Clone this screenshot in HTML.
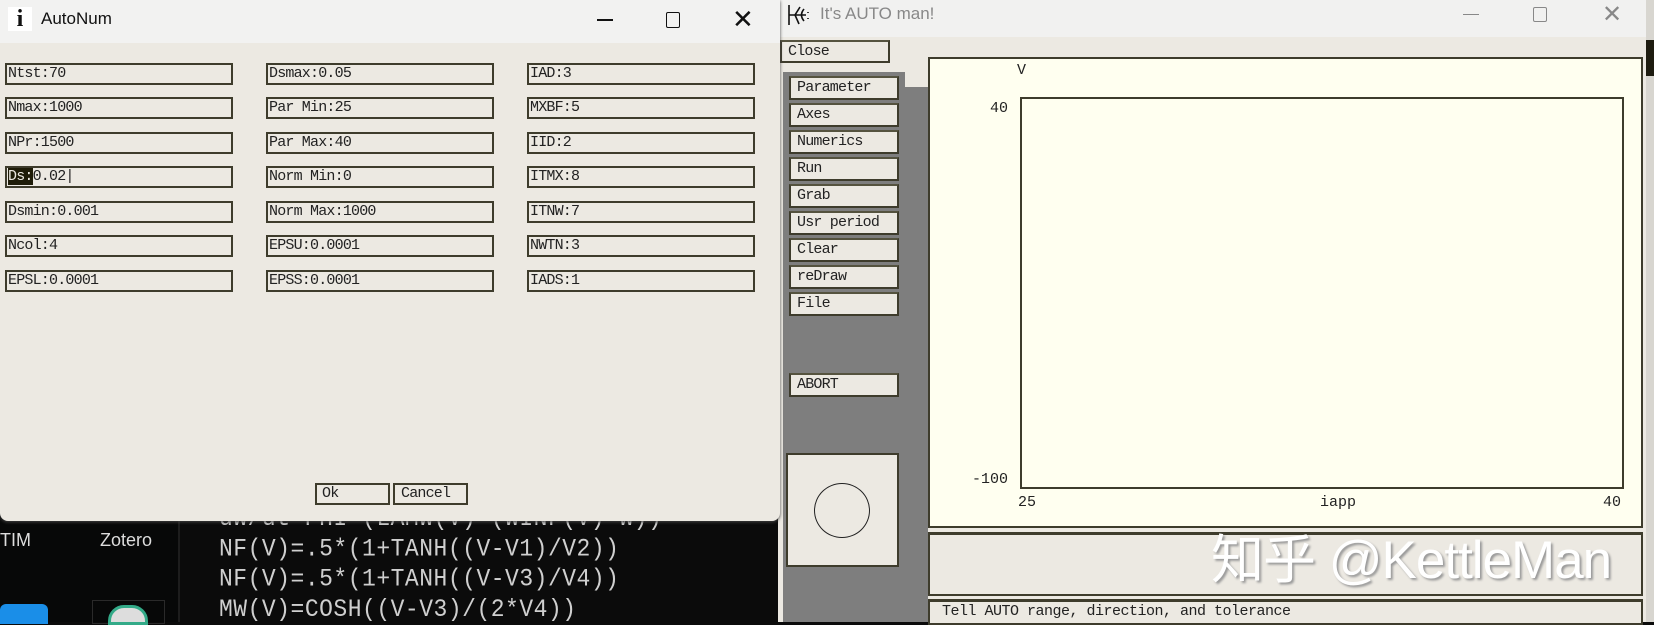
<!DOCTYPE html>
<html><head><meta charset="utf-8"><style>
*{margin:0;padding:0;box-sizing:border-box}
body{width:1654px;height:622px;position:relative;overflow:hidden;background:#0b0b0b;font-family:"Liberation Mono",monospace}
.a{position:absolute}
.f{position:absolute;height:22px;border:2px solid #3e3c2c;background:#ece9e2;font-size:15px;line-height:18px;padding-left:1px;color:#222;white-space:pre;letter-spacing:-0.8px}
.b{position:absolute;border:2px solid #3e3c2c;border-top-color:#55533f;background:#ece9e2;font-size:15px;line-height:19px;padding-left:6px;color:#222;letter-spacing:-0.8px;white-space:pre}
.t{font-family:"Liberation Sans",sans-serif}
</style></head><body>
<!-- desktop -->
<div class="a" style="left:0;top:500px;width:178px;height:122px;background:#070808"></div>
<div class="a" style="left:178px;top:500px;width:2px;height:122px;background:#1d1d1d"></div>
<div class="a t" style="left:0;top:530px;color:#ddd;font-size:18px">TIM</div>
<div class="a t" style="left:100px;top:530px;color:#ddd;font-size:18px">Zotero</div>
<div class="a" style="left:0;top:604px;width:48px;height:20px;background:#1a8ee8;border-radius:6px 6px 0 0"></div>
<div class="a" style="left:92px;top:600px;width:73px;height:24px;border:1px solid #2a2a2a"></div>
<div class="a" style="left:108px;top:605px;width:40px;height:20px;background:#ddd;border-radius:16px 16px 0 0;border:3px solid #3a8"></div>
<div class="a" style="left:219px;top:504px;color:#cfcfcf;font-size:23px;line-height:27.5px;white-space:pre;letter-spacing:0.5px;transform:scaleY(1.1);transform-origin:0 0">dw/dt=PHI*(LAMW(V)*(WINF(V)-w))
NF(V)=.5*(1+TANH((V-V1)/V2))
NF(V)=.5*(1+TANH((V-V3)/V4))
MW(V)=COSH((V-V3)/(2*V4))</div>

<!-- right window -->
<div class="a" style="left:778px;top:0;width:868px;height:622px;background:#ece9e2"></div>
<div class="a" style="left:778px;top:0;width:868px;height:37px;background:#f1f1f0"></div>
<div class="a" style="left:1646px;top:0;width:8px;height:622px;background:#d8d6d0"></div>
<div class="a" style="left:1646px;top:40px;width:8px;height:36px;background:#1e1c10"></div>
<svg class="a" style="left:786px;top:3px" width="28" height="24" viewBox="0 0 28 24"><path d="M3 2V22M3 12H20M14 4L9 12L13 21M18 6Q13 12 18 18M22 9V10M22 15V16" stroke="#111" stroke-width="1.6" fill="none"/></svg>
<div class="a t" style="left:820px;top:4px;font-size:17px;color:#888">It's AUTO man!</div>
<div class="a" style="left:1463px;top:14px;width:16px;height:1px;background:#888"></div>
<div class="a" style="left:1533px;top:7px;width:14px;height:15px;border:1px solid #888;border-radius:2px"></div>
<div class="a t" style="left:1602px;top:0px;font-size:24px;color:#888">✕</div>
<div class="a" style="left:783px;top:72px;width:145px;height:550px;background:#7e7e7e"></div>
<div class="a" style="left:905px;top:72px;width:23px;height:15px;background:#ece9e2"></div>
<div class="b" style="left:780px;top:40px;width:110px;height:23px">Close</div>
<div class="b" style="left:789px;top:76px;width:110px;height:24px">Parameter</div>
<div class="b" style="left:789px;top:103px;width:110px;height:24px">Axes</div>
<div class="b" style="left:789px;top:130px;width:110px;height:24px">Numerics</div>
<div class="b" style="left:789px;top:157px;width:110px;height:24px">Run</div>
<div class="b" style="left:789px;top:184px;width:110px;height:24px">Grab</div>
<div class="b" style="left:789px;top:211px;width:110px;height:24px">Usr period</div>
<div class="b" style="left:789px;top:238px;width:110px;height:24px">Clear</div>
<div class="b" style="left:789px;top:265px;width:110px;height:24px">reDraw</div>
<div class="b" style="left:789px;top:292px;width:110px;height:24px">File</div>
<div class="b" style="left:789px;top:373px;width:110px;height:24px">ABORT</div>
<div class="a" style="left:786px;top:453px;width:113px;height:114px;border:2px solid #3e3c2c;background:#ece9e2"></div>
<div class="a" style="left:814px;top:483px;width:56px;height:55px;border:1.5px solid #222;border-radius:50%"></div>
<!-- plot -->
<div class="a" style="left:928px;top:57px;width:715px;height:471px;border:2px solid #3e3c2c;background:#fffff0"></div>
<div class="a" style="left:1020px;top:97px;width:604px;height:392px;border:2px solid #3e3c2c"></div>
<div class="a" style="left:1017px;top:62px;font-size:15px;color:#222">V</div>
<div class="a" style="left:990px;top:100px;font-size:15px;color:#222">40</div>
<div class="a" style="left:972px;top:471px;font-size:15px;color:#222">-100</div>
<div class="a" style="left:1018px;top:494px;font-size:15px;color:#222">25</div>
<div class="a" style="left:1320px;top:494px;font-size:15px;color:#222">iapp</div>
<div class="a" style="left:1603px;top:494px;font-size:15px;color:#222">40</div>
<div class="a" style="left:928px;top:532px;width:715px;height:64px;border:2px solid #3e3c2c;border-top-width:3px;background:#ece9e2"></div>
<div class="a" style="left:928px;top:599px;width:715px;height:26px;border:2px solid #3e3c2c;border-top-width:3px;background:#ece9e2;font-size:15px;padding-left:12px;line-height:20px;color:#222;letter-spacing:-0.5px">Tell AUTO range, direction, and tolerance</div>
<div class="a" style="left:1211px;top:518px;font-family:'Liberation Sans','Noto Sans CJK SC',sans-serif;font-size:53px;color:#fff;text-shadow:2px 2px 2px #999;letter-spacing:-1px">知乎 @KettleMan</div>

<!-- dialog -->
<div class="a" style="left:0;top:0;width:780px;height:521px;background:#ece9e2;border-radius:0 0 8px 8px;box-shadow:0 1px 3px #444"></div>
<div class="a" style="left:0;top:0;width:780px;height:43px;background:#f2f2f1"></div>
<div class="a" style="left:8px;top:7px;width:24px;height:24px;background:#fff;font-family:'Liberation Serif',serif;font-weight:bold;font-size:24px;line-height:24px;text-align:center;color:#111">i</div>
<div class="a t" style="left:41px;top:9px;font-size:17px;color:#111">AutoNum</div>
<div class="a" style="left:597px;top:19px;width:16px;height:1.5px;background:#111"></div>
<div class="a" style="left:666px;top:12px;width:14px;height:16px;border:1.5px solid #111;border-radius:2px"></div>
<div class="a t" style="left:732px;top:4px;font-size:26px;color:#111">✕</div>

<div class="f" style="left:5px;top:63px;width:228px">Ntst:70</div>
<div class="f" style="left:5px;top:97px;width:228px">Nmax:1000</div>
<div class="f" style="left:5px;top:132px;width:228px">NPr:1500</div>
<div class="f" style="left:5px;top:166px;width:228px"><span style="background:#1e1c08;color:#ece9e2">Ds:</span>0.02|</div>
<div class="f" style="left:5px;top:201px;width:228px">Dsmin:0.001</div>
<div class="f" style="left:5px;top:235px;width:228px">Ncol:4</div>
<div class="f" style="left:5px;top:270px;width:228px">EPSL:0.0001</div>
<div class="f" style="left:266px;top:63px;width:228px">Dsmax:0.05</div>
<div class="f" style="left:266px;top:97px;width:228px">Par Min:25</div>
<div class="f" style="left:266px;top:132px;width:228px">Par Max:40</div>
<div class="f" style="left:266px;top:166px;width:228px">Norm Min:0</div>
<div class="f" style="left:266px;top:201px;width:228px">Norm Max:1000</div>
<div class="f" style="left:266px;top:235px;width:228px">EPSU:0.0001</div>
<div class="f" style="left:266px;top:270px;width:228px">EPSS:0.0001</div>
<div class="f" style="left:527px;top:63px;width:228px">IAD:3</div>
<div class="f" style="left:527px;top:97px;width:228px">MXBF:5</div>
<div class="f" style="left:527px;top:132px;width:228px">IID:2</div>
<div class="f" style="left:527px;top:166px;width:228px">ITMX:8</div>
<div class="f" style="left:527px;top:201px;width:228px">ITNW:7</div>
<div class="f" style="left:527px;top:235px;width:228px">NWTN:3</div>
<div class="f" style="left:527px;top:270px;width:228px">IADS:1</div>
<div class="f" style="left:315px;top:483px;width:75px;padding-left:5px">Ok</div>
<div class="f" style="left:393px;top:483px;width:75px;padding-left:6px">Cancel</div>
</body></html>
